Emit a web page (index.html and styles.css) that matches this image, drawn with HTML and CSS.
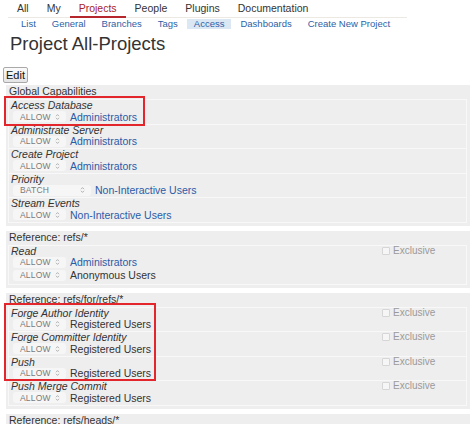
FILE: index.html
```html
<!DOCTYPE html>
<html>
<head>
<meta charset="utf-8">
<link rel="stylesheet" href="styles.css">
</head>
<body>
<div class="menu1">
  <span class="m1">All</span>
  <span class="m1">My</span>
  <span class="m1 active">Projects</span>
  <span class="m1">People</span>
  <span class="m1">Plugins</span>
  <span class="m1">Documentation</span>
</div>
<div class="menu2">
  <span class="m2">List</span>
  <span class="m2">General</span>
  <span class="m2">Branches</span>
  <span class="m2">Tags</span>
  <span class="m2 current">Access</span>
  <span class="m2">Dashboards</span>
  <span class="m2">Create New Project</span>
</div>
<h1 class="title">Project All-Projects</h1>
<div class="actions"><button class="edit">Edit</button></div>

<div class="section">
  <div class="sec-head">Global Capabilities</div>
  <div class="perm">
    <div class="perm-name"><span>Access Database</span></div>
    <div class="rule"><span class="sel">ALLOW<svg class="arr" viewBox="0 0 5 8"><path d="M1 3.2 L2.5 1.6 L4 3.2 M1 4.8 L2.5 6.4 L4 4.8"/></svg></span><span class="grp link">Administrators</span></div>
  </div>
  <div class="perm">
    <div class="perm-name"><span>Administrate Server</span></div>
    <div class="rule"><span class="sel">ALLOW<svg class="arr" viewBox="0 0 5 8"><path d="M1 3.2 L2.5 1.6 L4 3.2 M1 4.8 L2.5 6.4 L4 4.8"/></svg></span><span class="grp link">Administrators</span></div>
  </div>
  <div class="perm">
    <div class="perm-name"><span>Create Project</span></div>
    <div class="rule"><span class="sel">ALLOW<svg class="arr" viewBox="0 0 5 8"><path d="M1 3.2 L2.5 1.6 L4 3.2 M1 4.8 L2.5 6.4 L4 4.8"/></svg></span><span class="grp link">Administrators</span></div>
  </div>
  <div class="perm">
    <div class="perm-name"><span>Priority</span></div>
    <div class="rule"><span class="sel wide">BATCH<svg class="arr" viewBox="0 0 5 8"><path d="M1 3.2 L2.5 1.6 L4 3.2 M1 4.8 L2.5 6.4 L4 4.8"/></svg></span><span class="grp link">Non-Interactive Users</span></div>
  </div>
  <div class="perm">
    <div class="perm-name"><span>Stream Events</span></div>
    <div class="rule"><span class="sel">ALLOW<svg class="arr" viewBox="0 0 5 8"><path d="M1 3.2 L2.5 1.6 L4 3.2 M1 4.8 L2.5 6.4 L4 4.8"/></svg></span><span class="grp link">Non-Interactive Users</span></div>
  </div>
</div>

<div class="section">
  <div class="sec-head">Reference: refs/*</div>
  <div class="perm multi">
    <div class="perm-name"><span>Read</span><span class="excl"><span class="cb"></span>Exclusive</span></div>
    <div class="rule"><span class="sel">ALLOW<svg class="arr" viewBox="0 0 5 8"><path d="M1 3.2 L2.5 1.6 L4 3.2 M1 4.8 L2.5 6.4 L4 4.8"/></svg></span><span class="grp link">Administrators</span></div>
    <div class="rule"><span class="sel">ALLOW<svg class="arr" viewBox="0 0 5 8"><path d="M1 3.2 L2.5 1.6 L4 3.2 M1 4.8 L2.5 6.4 L4 4.8"/></svg></span><span class="grp">Anonymous Users</span></div>
  </div>
</div>

<div class="section">
  <div class="sec-head">Reference: refs/for/refs/*</div>
  <div class="perm">
    <div class="perm-name"><span>Forge Author Identity</span><span class="excl"><span class="cb"></span>Exclusive</span></div>
    <div class="rule"><span class="sel">ALLOW<svg class="arr" viewBox="0 0 5 8"><path d="M1 3.2 L2.5 1.6 L4 3.2 M1 4.8 L2.5 6.4 L4 4.8"/></svg></span><span class="grp">Registered Users</span></div>
  </div>
  <div class="perm">
    <div class="perm-name"><span>Forge Committer Identity</span><span class="excl"><span class="cb"></span>Exclusive</span></div>
    <div class="rule"><span class="sel">ALLOW<svg class="arr" viewBox="0 0 5 8"><path d="M1 3.2 L2.5 1.6 L4 3.2 M1 4.8 L2.5 6.4 L4 4.8"/></svg></span><span class="grp">Registered Users</span></div>
  </div>
  <div class="perm">
    <div class="perm-name"><span>Push</span><span class="excl"><span class="cb"></span>Exclusive</span></div>
    <div class="rule"><span class="sel">ALLOW<svg class="arr" viewBox="0 0 5 8"><path d="M1 3.2 L2.5 1.6 L4 3.2 M1 4.8 L2.5 6.4 L4 4.8"/></svg></span><span class="grp">Registered Users</span></div>
  </div>
  <div class="perm">
    <div class="perm-name"><span>Push Merge Commit</span><span class="excl"><span class="cb"></span>Exclusive</span></div>
    <div class="rule"><span class="sel">ALLOW<svg class="arr" viewBox="0 0 5 8"><path d="M1 3.2 L2.5 1.6 L4 3.2 M1 4.8 L2.5 6.4 L4 4.8"/></svg></span><span class="grp">Registered Users</span></div>
  </div>
</div>

<div class="section">
  <div class="sec-head">Reference: refs/heads/*</div>
</div>

<div class="mark mark-a"></div>
<div class="mark mark-b"></div>
</body>
</html>
```
FILE: styles.css
```css
html, body {
  margin: 0;
  padding: 0;
  background: #ffffff;
}
body {
  font-family: "Liberation Sans", Arial, sans-serif;
  font-size: 10.5px;
  color: #333333;
  width: 474px;
  height: 424px;
  overflow: hidden;
}
.menu1 {
  display: flex;
  padding-left: 8px;
  height: 17px;
}
.m1 {
  padding: 1px 9px 0;
  line-height: 14px;
  height: 15px;
  color: #333333;
}
.m1.active {
  color: #a8232b;
  border-bottom: 2px solid #b6262d;
}
.menu2 {
  display: flex;
  margin-left: 8px;
  width: 394px;
  padding-left: 5px;
  border-top: 1px solid #ece8e2;
  font-size: 9.5px;
  line-height: 10px;
  padding-top: 1px;
  height: 10px;
}
.m2 {
  padding: 0 8px;
  color: #2d5fa6;
}
.m2.current {
  background: #dbe7f3;
  margin: 0 1px;
  padding: 0 7px;
}
.title {
  margin: 4px 0 0 10px;
  font-size: 18.5px;
  font-weight: normal;
  line-height: 22px;
  color: #333333;
}
.actions {
  margin: 12px 0 2px 3px;
  height: 16px;
}
.edit {
  display: block;
  margin: 0;
  padding: 0;
  width: 25px;
  height: 16px;
  font-family: "Liberation Sans", Arial, sans-serif;
  font-size: 11px;
  line-height: 14px;
  color: #111111;
  background: linear-gradient(#fbfbfb, #e4e4e4);
  border: 1px solid #a9a9a9;
  border-radius: 2px;
}
.section {
  margin: 0 4px 5px 6px;
  background: #eeeeee;
  padding: 0 3px 3px 2px;
}
.sec-head {
  padding-left: 1px;
  line-height: 13px;
  height: 14px;
}
.perm {
  border: 1px solid #f8f8f8;
  border-bottom: 0;
  padding-bottom: 0.5px;
}
.perm:last-child {
  border-bottom: 1px solid #f8f8f8;
}
.perm.multi {
  padding-bottom: 2px;
}
.perm-name {
  display: flex;
  padding-left: 2px;
  line-height: 10px;
  height: 10px;
  font-style: italic;
}
.excl {
  margin-left: auto;
  width: 84px;
  display: flex;
  align-items: center;
  font-style: normal;
  font-size: 10px;
  color: #9a9a9a;
}
.cb {
  width: 6px;
  height: 6px;
  border: 1px solid #d6d6d6;
  background: #f6f6f6;
  border-radius: 1px;
  margin-right: 3px;
}
.rule {
  display: flex;
  align-items: center;
  height: 13px;
  padding-left: 4px;
}
.sel {
  display: flex;
  align-items: center;
  justify-content: space-between;
  box-sizing: border-box;
  width: 53px;
  height: 11px;
  padding: 0 6px 0 7px;
  background: #f6f6f6;
  border-radius: 3px;
  font-size: 8.5px;
  color: #7a7a7a;
  letter-spacing: 0.2px;
}
.sel.wide {
  width: 78px;
}
.arr {
  width: 5px;
  height: 8px;
}
.arr path {
  fill: none;
  stroke: #a0a0a0;
  stroke-width: 0.8;
}
.grp {
  margin-left: 4px;
  color: #333333;
}
.grp.link {
  color: #2b5ba8;
}
.mark {
  position: absolute;
  box-sizing: border-box;
  border: 2px solid #e2262c;
}
.mark-a {
  left: 4px;
  top: 96px;
  width: 141px;
  height: 30px;
}
.mark-b {
  left: 4px;
  top: 303px;
  width: 152px;
  height: 78px;
}
```
